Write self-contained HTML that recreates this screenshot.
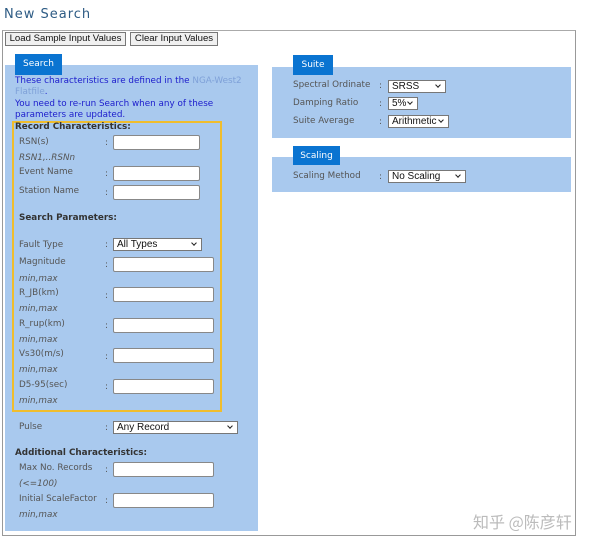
<!DOCTYPE html><html><head><style>
*{margin:0;padding:0;box-sizing:border-box}
body{width:600px;height:546px;background:#fff;position:relative;overflow:hidden;font-family:"DejaVu Sans",Verdana,sans-serif;font-size:8.8px;color:#555}
.a{position:absolute;white-space:nowrap}
.h{font-size:13px;color:#2d5b84;letter-spacing:1px;left:4px;top:7px}
.btn{position:absolute;top:32px;height:14px;border:1px solid #777;background:#f0f0f0;font-family:"Liberation Sans",Arial,sans-serif;font-size:9.6px;color:#111;line-height:12px;padding:0 3px;white-space:nowrap;overflow:hidden;text-align:center}
.panel{position:absolute;background:#a9c9ee}
.tab{position:absolute;background:#0a74d1;color:#fff;font-size:9px;text-align:center;line-height:20px}
.in{position:absolute;height:15px;background:#fff;border:1px solid #888;border-radius:2px}
.sel{position:absolute;height:13px;background:#fff;border:1px solid #777;font-family:"Liberation Sans",Arial,sans-serif;font-size:10px;color:#111;line-height:11px;padding-left:3px;white-space:nowrap;overflow:hidden}
.sel:after{content:"";position:absolute;right:5px;top:2px;width:3px;height:3px;border-right:1.5px solid #222;border-bottom:1.5px solid #222;transform:rotate(45deg)}
.i{font-style:italic}
.b{font-weight:bold;color:#333}
.bl{color:#1c1ccc}
</style></head><body>
<div class="a h">New Search</div>
<div class="a" style="left:2px;top:30px;width:574px;height:506px;border:1px solid #999;border-top:1px solid #aaa"></div>
<div class="btn" style="left:5px;width:121px">Load Sample Input Values</div>
<div class="btn" style="left:130px;width:88px">Clear Input Values</div>

<div class="panel" style="left:5px;top:65px;width:253px;height:466px"></div>
<div class="tab" style="left:15px;top:54px;width:47px;height:21px">Search</div>
<div class="a bl" style="left:15px;top:76px">These characteristics are defined in the <span style="color:#7fa1d8">NGA-West2</span></div>
<div class="a bl" style="left:15px;top:87px"><span style="color:#7fa1d8">Flatfile</span>.</div>
<div class="a bl" style="left:15px;top:99px">You need to re-run Search when any of these</div>
<div class="a bl" style="left:15px;top:110px">parameters are updated.</div>
<div class="a" style="left:12px;top:121px;width:210px;height:291px;border:2px solid #f0bd2d"></div>
<div class="a b" style="left:15px;top:122px">Record Characteristics:</div>
<div class="a" style="left:19px;top:137px">RSN(s)</div><div class="a" style="left:105px;top:138px">:</div><div class="in" style="left:113px;top:135px;width:87px"></div>
<div class="a i" style="left:19px;top:153px">RSN1,..RSNn</div>
<div class="a" style="left:19px;top:167px">Event Name</div><div class="a" style="left:105px;top:169px">:</div><div class="in" style="left:113px;top:166px;width:87px"></div>
<div class="a" style="left:19px;top:186px">Station Name</div><div class="a" style="left:105px;top:188px">:</div><div class="in" style="left:113px;top:185px;width:87px"></div>
<div class="a b" style="left:19px;top:213px">Search Parameters:</div>
<div class="a" style="left:19px;top:240px">Fault Type</div><div class="a" style="left:105px;top:240px">:</div><div class="sel" style="left:113px;top:238px;width:89px">All Types</div>
<div class="a" style="left:19px;top:257px">Magnitude</div><div class="a" style="left:105px;top:260px">:</div><div class="in" style="left:113px;top:257px;width:101px"></div>
<div class="a i" style="left:19px;top:274px">min,max</div>
<div class="a" style="left:19px;top:288px">R_JB(km)</div><div class="a" style="left:105px;top:291px">:</div><div class="in" style="left:113px;top:287px;width:101px"></div>
<div class="a i" style="left:19px;top:304px">min,max</div>
<div class="a" style="left:19px;top:319px">R_rup(km)</div><div class="a" style="left:105px;top:321px">:</div><div class="in" style="left:113px;top:318px;width:101px"></div>
<div class="a i" style="left:19px;top:335px">min,max</div>
<div class="a" style="left:19px;top:349px">Vs30(m/s)</div><div class="a" style="left:105px;top:352px">:</div><div class="in" style="left:113px;top:348px;width:101px"></div>
<div class="a i" style="left:19px;top:365px">min,max</div>
<div class="a" style="left:19px;top:380px">D5-95(sec)</div><div class="a" style="left:105px;top:382px">:</div><div class="in" style="left:113px;top:379px;width:101px"></div>
<div class="a i" style="left:19px;top:396px">min,max</div>
<div class="a" style="left:19px;top:422px">Pulse</div><div class="a" style="left:105px;top:423px">:</div><div class="sel" style="left:113px;top:421px;width:125px">Any Record</div>
<div class="a b" style="left:15px;top:448px">Additional Characteristics:</div>
<div class="a" style="left:19px;top:463px">Max No. Records</div><div class="a" style="left:105px;top:465px">:</div><div class="in" style="left:113px;top:462px;width:101px"></div>
<div class="a i" style="left:19px;top:479px">(&lt;=100)</div>
<div class="a" style="left:19px;top:494px">Initial ScaleFactor</div><div class="a" style="left:105px;top:496px">:</div><div class="in" style="left:113px;top:493px;width:101px"></div>
<div class="a i" style="left:19px;top:510px">min,max</div>

<div class="panel" style="left:272px;top:67px;width:299px;height:71px"></div>
<div class="tab" style="left:293px;top:55px;width:40px;height:20px">Suite</div>
<div class="a" style="left:293px;top:80px">Spectral Ordinate</div><div class="a" style="left:379px;top:81px">:</div><div class="sel" style="left:388px;top:80px;width:58px">SRSS</div>
<div class="a" style="left:293px;top:98px">Damping Ratio</div><div class="a" style="left:379px;top:99px">:</div><div class="sel" style="left:388px;top:97px;width:30px">5%</div>
<div class="a" style="left:293px;top:116px">Suite Average</div><div class="a" style="left:379px;top:117px">:</div><div class="sel" style="left:388px;top:115px;width:61px;padding-right:12px">Arithmetic</div>
<div class="panel" style="left:272px;top:157px;width:299px;height:35px"></div>
<div class="tab" style="left:293px;top:146px;width:47px;height:19px">Scaling</div>
<div class="a" style="left:293px;top:171px">Scaling Method</div><div class="a" style="left:379px;top:172px">:</div><div class="sel" style="left:388px;top:170px;width:78px">No Scaling</div>
<div class="a" style="left:473px;top:509px;font-family:'Noto Sans CJK SC',sans-serif;font-size:16px;color:#bbb">知乎 @陈彦轩</div>
</body></html>
